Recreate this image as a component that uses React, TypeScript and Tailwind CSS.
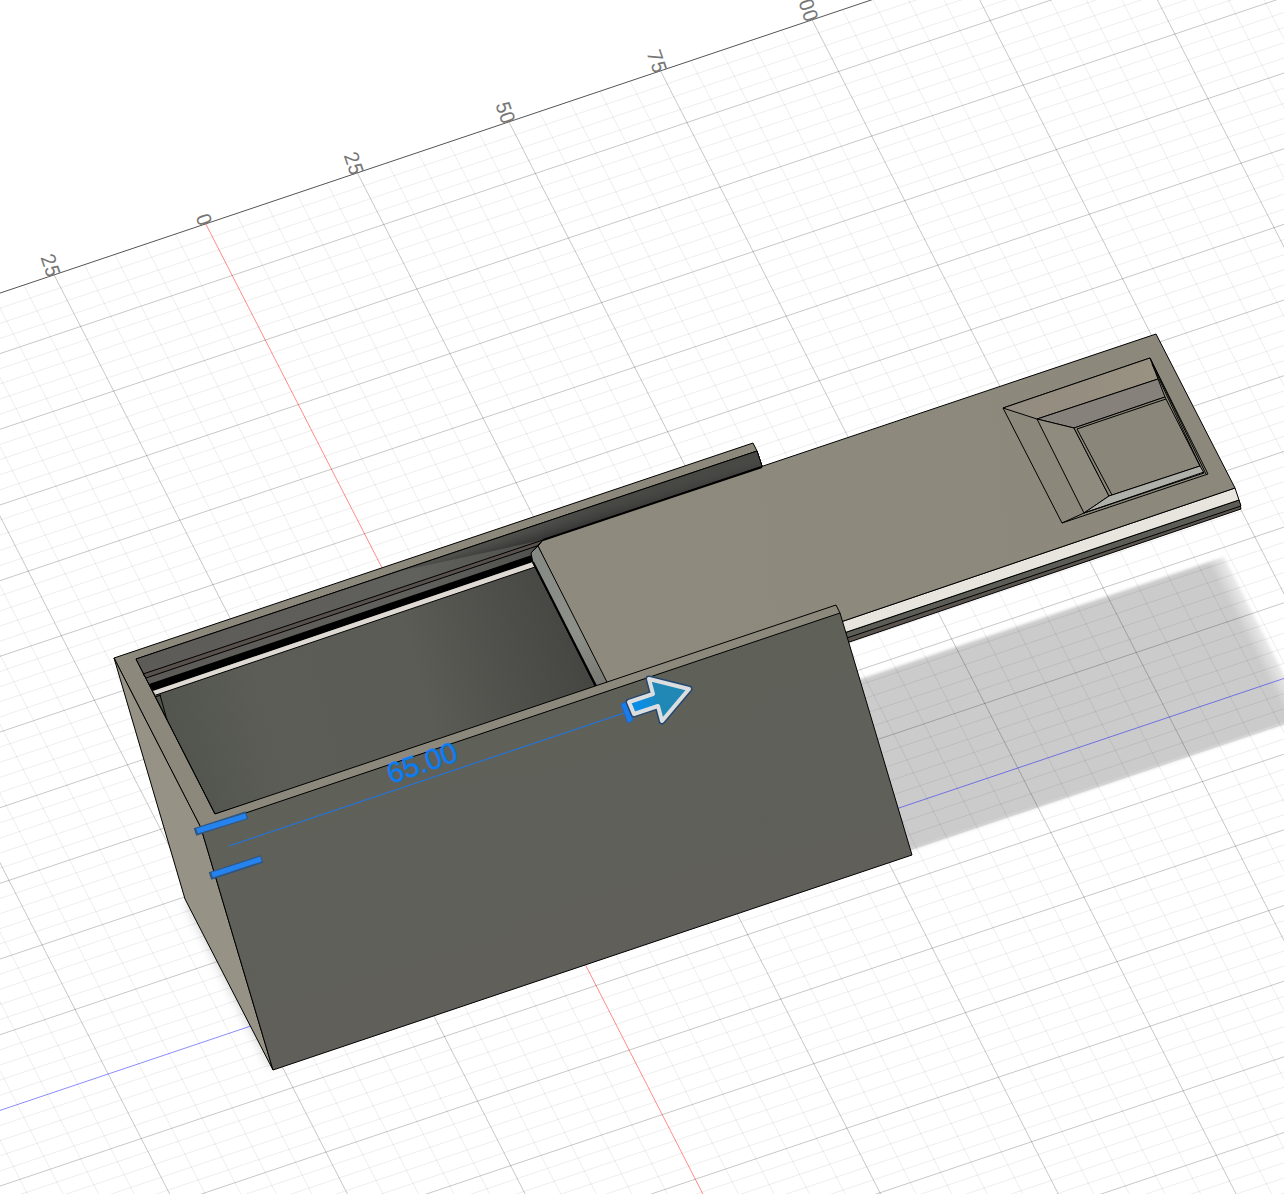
type Point = [number, number];

// Ground plane: screen position of the origin and the screen vectors of one major cell
const ORIGIN: Point = [563, 921];
const U: Point = [151.6, -51];
const V: Point = [33.08, 64.55];
const BACK_EDGE = -10.8;

function project(u: number, v: number): Point {
  return [ORIGIN[0] + u * U[0] + v * V[0], ORIGIN[1] + u * U[1] + v * V[1]];
}

function GridLine({ from, to, className }: { from: Point; to: Point; className: string }) {
  return <line x1={from[0]} y1={from[1]} x2={to[0]} y2={to[1]} className={className} />;
}

function lineClass(i: number, axis: string) {
  if (i === 0) return axis;
  return i % 5 === 0 ? 'stroke-black/22' : 'stroke-black/7';
}

function Grid() {
  const columns = Array.from({ length: 81 }, (_, i) => i - 35);
  const rows = Array.from({ length: 99 }, (_, i) => i - 53);

  return (
    <g strokeWidth="1">
      {columns.map((i) => (
        <GridLine
          key={`u${i}`}
          from={project(i / 5, BACK_EDGE)}
          to={project(i / 5, 9)}
          className={lineClass(i, 'stroke-[#ff0000]/45')}
        />
      ))}
      {rows.map((i) => (
        <GridLine
          key={`v${i}`}
          from={project(-7, i / 5)}
          to={project(9, i / 5)}
          className={lineClass(i, 'stroke-[#0000ff]/45')}
        />
      ))}
      <GridLine from={project(-7, BACK_EDGE)} to={project(9, BACK_EDGE)} className="stroke-[#555555]" />
    </g>
  );
}

const ticks = [
  { at: -1, label: '25' },
  { at: 0, label: '0' },
  { at: 1, label: '25' },
  { at: 2, label: '50' },
  { at: 3, label: '75' },
  { at: 4, label: '100' },
];

function Ruler() {
  return (
    <g className="fill-[#777777] font-['Liberation_Sans_Narrow','Roboto',sans-serif] text-[20px]">
      {ticks.map(({ at, label }) => {
        const [x, y] = project(at, BACK_EDGE);
        return (
          <text
            key={at}
            textAnchor="end"
            dominantBaseline="central"
            transform={`translate(${x} ${y + 1}) rotate(71)`}
          >
            {label}
          </text>
        );
      })}
    </g>
  );
}

function Shadows() {
  return (
    <g>
      <polygon points="840,686 1224,557 1320,745 1284,724 890,857" fill="url(#shadow)" filter="url(#soft)" />
      <polygon points="187,902 273,1068 290,1040 210,890" className="fill-black/25" filter="url(#contact)" />
    </g>
  );
}

function Box() {
  return (
    <g className="stroke-black" strokeWidth="1" strokeLinejoin="round">
      {/* rim */}
      <polygon points="114,658 753,443 757,451 762,466 840,613 201,828" className="fill-[#8c887b]" />

      {/* inside */}
      <polygon points="136,659 757,451 762,466 600,690 215,814" fill="url(#cavity)" />
      <polygon points="136,659 757,451 762,467 543,540 532,556 150,684" fill="url(#rearWall)" stroke="none" />
      <polygon points="400,571 757,451 762,467 543,540" fill="url(#rearShade)" stroke="none" />
      <polygon points="143,674 543,540 537,546 146,678" className="fill-[#57504b]" />
      <polygon points="149,684 532,555 533,562 153,691" className="fill-black" stroke="none" />
      <polygon points="153,691 533,562 535,567 156,695" className="fill-[#dedad3]" stroke="none" />
      <path d="M156 695 535 567M160 695 167 720M155 697 161 695" fill="none" />
      <path d="M136 659 757 451 762 466M136 659 215 814" fill="none" />

      {/* left side */}
      <polygon points="114,658 201,828 273,1070 185,899" className="fill-[#979286]" />
    </g>
  );
}

function Lid() {
  return (
    <g className="stroke-black" strokeWidth="1" strokeLinejoin="round">
      <polygon points="820,642 1239,500 1241,509 820,652" className="fill-[#5b554f]" />
      <polygon points="820,641 1239,500 1241,506 820,647" className="fill-[#5b5d56]" />
      <polygon points="820,629 1235,488 1239,500 820,641" className="fill-[#e8e5de]" />
      <polygon points="538,546 543,540 1156,334 1235,488 820,629 607,690" fill="url(#lid)" />
      <path d="M543 540 762 467" className="stroke-2" />
      <polygon points="531,553 538,546 608,684 597,690 533,563" fill="url(#chamfer)" />
      <path d="M533 562 597 688" className="stroke-2" />
      <path d="M531 553 543 540" />

      {/* finger recess */}
      <polygon points="1003,408 1150,358 1208,474 1062,523" className="fill-[#8b877a]" />
      <polygon points="1003,408 1150,358 1158,379 1037,419" fill="url(#lip)" />
      <polygon points="1037,419 1158,379 1165,397 1074,428" className="fill-[#86817a]" />
      <polygon points="1037,419 1074,428 1109,496 1084,513" className="fill-[#8f8b7f]" />
      <polygon points="1074,428 1165,397 1200,466 1109,496" className="fill-[#8a8679]" />
      <polygon points="1109,496 1200,466 1204,473 1084,513" className="fill-[#b0b0ab]" />
      <path
        d="M1077 429 1166 399M1077 429 1112 495M1152 364 1200 466M1150 358 1206 474M1062 523 1084 513 1204 472"
        fill="none"
      />
    </g>
  );
}

function FrontWall() {
  return (
    <g className="stroke-black" strokeWidth="1" strokeLinejoin="round">
      <polygon points="215,814 836,605 840,613 201,828" className="fill-[#8c887b]" stroke="none" />
      <path d="M215 814 836 605 840 613" fill="none" />
      <polygon points="201,828 840,613 912,855 273,1070" fill="url(#front)" />
    </g>
  );
}

function Manipulator() {
  return (
    <g>
      <path d="M229 846 624 713" className="stroke-[#1878f0]" strokeWidth="1" />
      <g className="stroke-[#2f5680]" strokeWidth="8">
        <path d="M195 832 247 815" />
        <path d="M210 876 262 859" />
      </g>
      <g className="stroke-[#2583f0]" strokeWidth="5">
        <path d="M197 831 246 816" />
        <path d="M212 875 261 859" />
      </g>
      <polygon points="621,704 626,702 633,720 628,723" className="fill-[#1a7cec] stroke-[#1a6bd0]" strokeWidth="1" />
      <g strokeLinejoin="round">
        <path
          d="M629 702 653 694 649 679 689 689 662 721 658 706 634 714Z"
          className="fill-[#2188b5] stroke-[#24486f]"
          strokeWidth="7"
        />
        <path
          d="M629 702 653 694 649 679 689 689 662 721 658 706 634 714Z"
          fill="url(#arrow)"
          className="stroke-[#dcdddf]"
          strokeWidth="4"
        />
      </g>
      <text
        transform="translate(391 784) rotate(-19)"
        className="fill-[#0a7cf5] stroke-[#0a7cf5]/50 font-['Liberation_Sans',sans-serif] text-[29px]"
      >
        65.00
      </text>
    </g>
  );
}

function Gradients() {
  return (
    <defs>
      <linearGradient id="shadow" gradientUnits="userSpaceOnUse" x1="1209" y1="567" x2="1234" y2="554">
        <stop offset="0" stopColor="#cbcbcb" />
        <stop offset="1" stopColor="#cbcbcb" stopOpacity="0" />
      </linearGradient>
      <linearGradient id="cavity" gradientUnits="userSpaceOnUse" x1="160" y1="740" x2="585" y2="620">
        <stop offset="0" stopColor="#51534d" />
        <stop offset="0.25" stopColor="#5b5d56" />
        <stop offset="0.6" stopColor="#5b5c56" />
        <stop offset="1" stopColor="#444440" />
      </linearGradient>
      <linearGradient id="rearWall" gradientUnits="userSpaceOnUse" x1="140" y1="670" x2="757" y2="460">
        <stop offset="0" stopColor="#5d5b58" />
        <stop offset="0.45" stopColor="#60605c" />
        <stop offset="0.75" stopColor="#484845" />
        <stop offset="1" stopColor="#484845" />
      </linearGradient>
      <linearGradient id="rearShade" gradientUnits="userSpaceOnUse" x1="640" y1="490" x2="645" y2="507">
        <stop offset="0" stopColor="#4d4d4a" stopOpacity="0" />
        <stop offset="1" stopColor="#333331" stopOpacity="0.8" />
      </linearGradient>
      <linearGradient id="lid" gradientUnits="userSpaceOnUse" x1="560" y1="540" x2="1200" y2="480">
        <stop offset="0" stopColor="#8e8a7d" />
        <stop offset="1" stopColor="#8c887b" />
      </linearGradient>
      <linearGradient id="lip" gradientUnits="userSpaceOnUse" x1="1010" y1="410" x2="1155" y2="370">
        <stop offset="0" stopColor="#928b7f" />
        <stop offset="1" stopColor="#999181" />
      </linearGradient>
      <linearGradient id="chamfer" gradientUnits="userSpaceOnUse" x1="535" y1="550" x2="603" y2="685">
        <stop offset="0" stopColor="#858984" />
        <stop offset="0.6" stopColor="#8e918a" />
        <stop offset="1" stopColor="#777872" />
      </linearGradient>
      <linearGradient id="front" gradientUnits="userSpaceOnUse" x1="520" y1="720" x2="590" y2="960">
        <stop offset="0" stopColor="#5f6159" />
        <stop offset="1" stopColor="#605f5a" />
      </linearGradient>
      <linearGradient id="arrow" gradientUnits="userSpaceOnUse" x1="644" y1="708" x2="660" y2="703">
        <stop offset="0" stopColor="#0b8de4" />
        <stop offset="1" stopColor="#2188b5" />
      </linearGradient>
      <filter id="soft">
        <feGaussianBlur stdDeviation="1.5" />
      </filter>
      <filter id="contact" x="-50%" y="-50%" width="200%" height="200%">
        <feGaussianBlur stdDeviation="6" />
      </filter>
    </defs>
  );
}

export default function App() {
  return (
    <main className="h-screen w-full overflow-hidden bg-white">
      <svg viewBox="0 0 1284 1194" preserveAspectRatio="xMidYMid slice" className="block h-full w-full">
        <Gradients />
        <Shadows />
        <Grid />
        <Ruler />
        <Box />
        <Lid />
        <FrontWall />
        <Manipulator />
      </svg>
    </main>
  );
}
